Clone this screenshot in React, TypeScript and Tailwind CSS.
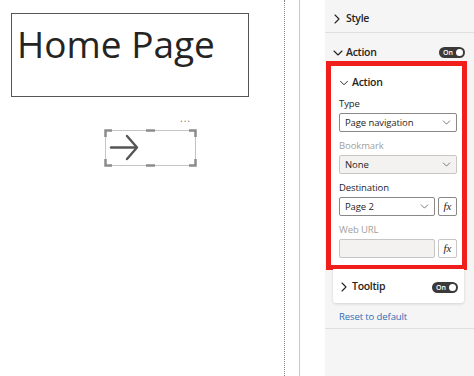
import { ChevronDown, ChevronRight } from "lucide-react";

const font = { fontFamily: '"Open Sans", "Noto Sans", sans-serif' };

function Toggle() {
  return (
    <div className="flex h-[11px] w-[26px] items-center justify-between rounded-full bg-[#3b3a39] pl-[4px] pr-[2px]">
      <span className="text-[7px] font-semibold leading-none text-white">On</span>
      <span className="h-[7px] w-[7px] rounded-full bg-white" />
    </div>
  );
}

function Label({ children, disabled }: { children: string; disabled?: boolean }) {
  return (
    <div
      className={`mt-[7px] h-[14px] text-[9.5px] leading-[14px] tracking-[-0.1px] ${
        disabled ? "text-[#a19f9d]" : "text-[#252423]"
      }`}
    >
      {children}
    </div>
  );
}

function Select({ value, disabled, short }: { value: string; disabled?: boolean; short?: boolean }) {
  return (
    <div
      className={`flex h-[19px] items-center justify-between rounded-[2px] border pl-[5px] pr-[3px] ${
        short ? "w-[96px]" : "w-[118px]"
      } ${disabled ? "border-[#c8c6c4] bg-[#f3f2f1]" : "border-[#8a8886] bg-white"}`}
    >
      <span className="text-[9.5px] leading-none tracking-[-0.1px] text-[#252423]">{value}</span>
      <ChevronDown className="h-[13px] w-[13px] text-[#605e5c]" strokeWidth={1.5} />
    </div>
  );
}

function Fx({ disabled }: { disabled?: boolean }) {
  return (
    <div
      className={`flex h-[19px] w-[19px] items-center justify-center rounded-[2px] border bg-white ${
        disabled ? "border-[#c8c6c4]" : "border-[#8a8886]"
      }`}
    >
      <span className="text-[11px] italic leading-none text-[#252423]" style={{ fontFamily: '"Liberation Serif", serif' }}>
        fx
      </span>
    </div>
  );
}

function SelectionBox() {
  return (
    <svg width="93" height="38" viewBox="0 0 93 38" className="absolute left-[104px] top-[129px]">
      <rect x="1.5" y="1.5" width="90" height="35" fill="none" stroke="#c4c4c4" strokeWidth="1" />
      <g stroke="#8c8c8c" strokeWidth="2.5" fill="none">
        <path d="M1.5 8 V1.5 H8" />
        <path d="M85 1.5 H91.5 V8" />
        <path d="M1.5 30 V36.5 H8" />
        <path d="M85 36.5 H91.5 V30" />
        <path d="M42 1.5 H51" />
        <path d="M42 36.5 H51" />
      </g>
      <g stroke="#555" strokeWidth="2.4" fill="none" strokeLinecap="round" strokeLinejoin="round">
        <path d="M7 18.5 H32" />
        <path d="M23 7 L33 18.5 L23 30" />
      </g>
    </svg>
  );
}

export default function App() {
  return (
    <div className="flex h-[376px] w-[474px] overflow-hidden bg-white text-[#252423]" style={font}>
      {/* report canvas */}
      <div className="relative h-full w-[285px] shrink-0 border-r border-dotted border-[#8a8a8a]">
        <div className="absolute left-[11px] top-[13px] h-[84px] w-[238px] border-[1.5px] border-[#555]">
          <div className="pl-[5px] pt-[10px] text-[37px] leading-[40px] text-[#252423]">Home Page</div>
        </div>
        <div className="absolute left-[180px] top-[113px] text-[10px] leading-none tracking-[1px] text-[#777]">...</div>
        <SelectionBox />
      </div>
      <div className="h-full w-[15px] shrink-0 border-r border-[#c8c8c8]" />
      <div className="h-full w-[25px] shrink-0" />

      {/* format pane */}
      <div className="flex h-full w-[149px] shrink-0 flex-col bg-[#f5f5f5]">
        <div className="flex h-[33px] items-center gap-[1px] border-b border-[#e1dfdd] pl-[4px] pt-[5px]">
          <ChevronRight className="h-[16px] w-[16px]" strokeWidth={1.6} />
          <span className="text-[10.5px] font-semibold tracking-[-0.3px]">Style</span>
        </div>
        <div className="flex h-[28px] items-center justify-between pl-[5px] pr-[9px] pt-[11px]">
          <div className="flex items-center">
            <ChevronDown className="h-[16px] w-[16px]" strokeWidth={1.6} />
            <span className="text-[10.5px] font-semibold tracking-[-0.3px]">Action</span>
          </div>
          <Toggle />
        </div>

        <div className="ml-[1px] w-[141px] border-[5px] border-[#f01f1b] bg-white">
          <div className="flex h-[199px] flex-col pl-[8px] pt-[10px]">
            <div className="-ml-[2px] flex h-[14px] items-center gap-[1px]">
              <ChevronDown className="h-[14px] w-[14px]" strokeWidth={1.6} />
              <span className="text-[10.5px] font-semibold tracking-[-0.3px]">Action</span>
            </div>
            <Label>Type</Label>
            <div className="mt-[2px]">
              <Select value="Page navigation" />
            </div>
            <Label disabled>Bookmark</Label>
            <div className="mt-[2px]">
              <Select value="None" disabled />
            </div>
            <Label>Destination</Label>
            <div className="mt-[2px] flex gap-[3px]">
              <Select value="Page 2" short />
              <Fx />
            </div>
            <Label disabled>Web URL</Label>
            <div className="mt-[2px] flex gap-[3px]">
              <div className="h-[19px] w-[96px] rounded-[2px] border border-[#c8c6c4] bg-[#f3f2f1]" />
              <Fx disabled />
            </div>
          </div>
        </div>

        <div className="ml-[8px] -mt-px flex h-[34px] w-[131px] items-center justify-between rounded-b-[3px] bg-white pl-[3px] pr-[6px] pt-[2px] shadow-[0_1px_3px_rgba(0,0,0,0.15)]">
          <div className="flex items-center">
            <ChevronRight className="h-[16px] w-[16px]" strokeWidth={1.6} />
            <span className="text-[10.5px] font-semibold tracking-[-0.3px]">Tooltip</span>
          </div>
          <Toggle />
        </div>
        <div className="mt-[7px] pl-[14px] text-[9.5px] leading-[14px] tracking-[-0.1px] text-[#2f6db5]">Reset to default</div>
        <div className="mt-[4px] border-t border-[#e1dfdd]" />
      </div>
    </div>
  );
}
